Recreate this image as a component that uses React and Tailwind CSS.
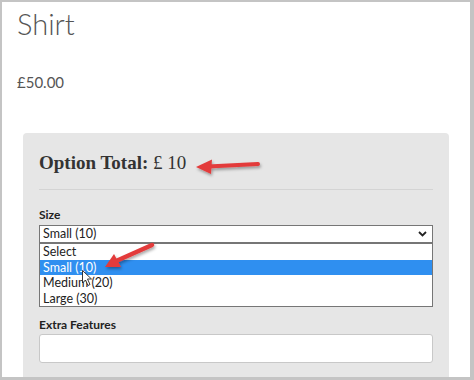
import React from "react";

const sizes = ["Select", "Small (10)", "Medium (20)", "Large (30)"];

function Arrows() {
  // red callout arrows + mouse pointer drawn over the screenshot
  return (
    <svg
      className="absolute inset-0 pointer-events-none"
      width="474"
      height="380"
      viewBox="0 0 474 380"
    >
      <defs>
        <filter id="sh" x="-20%" y="-50%" width="140%" height="200%">
          <feDropShadow dx="1" dy="2" stdDeviation="1.5" floodColor="#000" floodOpacity="0.35" />
        </filter>
      </defs>
      <g filter="url(#sh)" fill="#e33b3b" stroke="#e33b3b" strokeLinecap="round">
        <line x1="256" y1="162" x2="206" y2="164.5" strokeWidth="4" />
        <polygon points="194,165 210,157.5 209,172" stroke="none" />
        <line x1="150" y1="243" x2="113" y2="259.5" strokeWidth="4.5" />
        <polygon points="103,265 112,252 119,265" stroke="none" />
      </g>
      <path
        d="M80.5 268.5 L80.5 281 L83.5 278 L86 283.5 L88 282.5 L85.5 277 L89.5 277 Z"
        fill="#fff"
        stroke="#222"
        strokeWidth="0.9"
        strokeLinejoin="round"
      />
    </svg>
  );
}

export default function App() {
  return (
    <div className="relative w-[474px] h-[380px] bg-white border-l-2 border-t-2 border-r-4 border-b-[3px] border-[#c4c4c4] flex flex-col overflow-hidden">
      <div className="pl-[15px] pt-[4px] text-[#555]">
        <h1 className="text-[29px] leading-[36px] font-light font-['Lato',sans-serif]">Shirt</h1>
        <p className="mt-[31px] text-[15px] leading-[18px] font-['Lato',sans-serif]">£50.00</p>
      </div>

      <div className="mt-[42px] ml-[21px] w-[426px] flex-1 bg-[#e6e6e6] rounded-t-[4px] px-[16px] pt-[18px]">
        <h2 className="text-[19px] leading-[24px] text-[#333] font-['Liberation_Serif',serif]">
          <span className="font-bold">Option Total:</span> £ 10
        </h2>
        <div className="mt-[14px] h-px bg-[#d4d4d4]" />

        <label className="block mt-[17px] text-[12px] leading-[16px] font-bold text-[#222] font-['Lato',sans-serif]">
          Size
        </label>
        <div className="mt-[2px] h-[18px] bg-white border border-[#767676] flex items-center justify-between pl-[3px] pr-[5px] font-['Lato',sans-serif] text-[12.5px] text-[#222]">
          <span>Small (10)</span>
          <svg width="9" height="6" viewBox="0 0 9 6">
            <path d="M1 1 L4.5 4.5 L8 1" fill="none" stroke="#222" strokeWidth="1.8" />
          </svg>
        </div>
        <ul className="h-[64px] bg-white border border-[#767676] font-['Lato',sans-serif] text-[12.5px] text-[#222]">
          {sizes.map((s, i) => (
            <li
              key={s}
              className={`h-[15.5px] leading-[15.5px] pl-[3px] ${
                i === 1 ? "bg-[#2f8ff0] text-white" : ""
              }`}
            >
              {s}
            </li>
          ))}
        </ul>

        <label className="block mt-[10px] text-[12px] leading-[16px] font-bold text-[#222] font-['Lato',sans-serif]">
          Extra Features
        </label>
        <div className="mt-[1px] h-[29px] bg-white border border-[#c8c8c8] rounded-[3px]" />
      </div>

      <Arrows />
    </div>
  );
}
